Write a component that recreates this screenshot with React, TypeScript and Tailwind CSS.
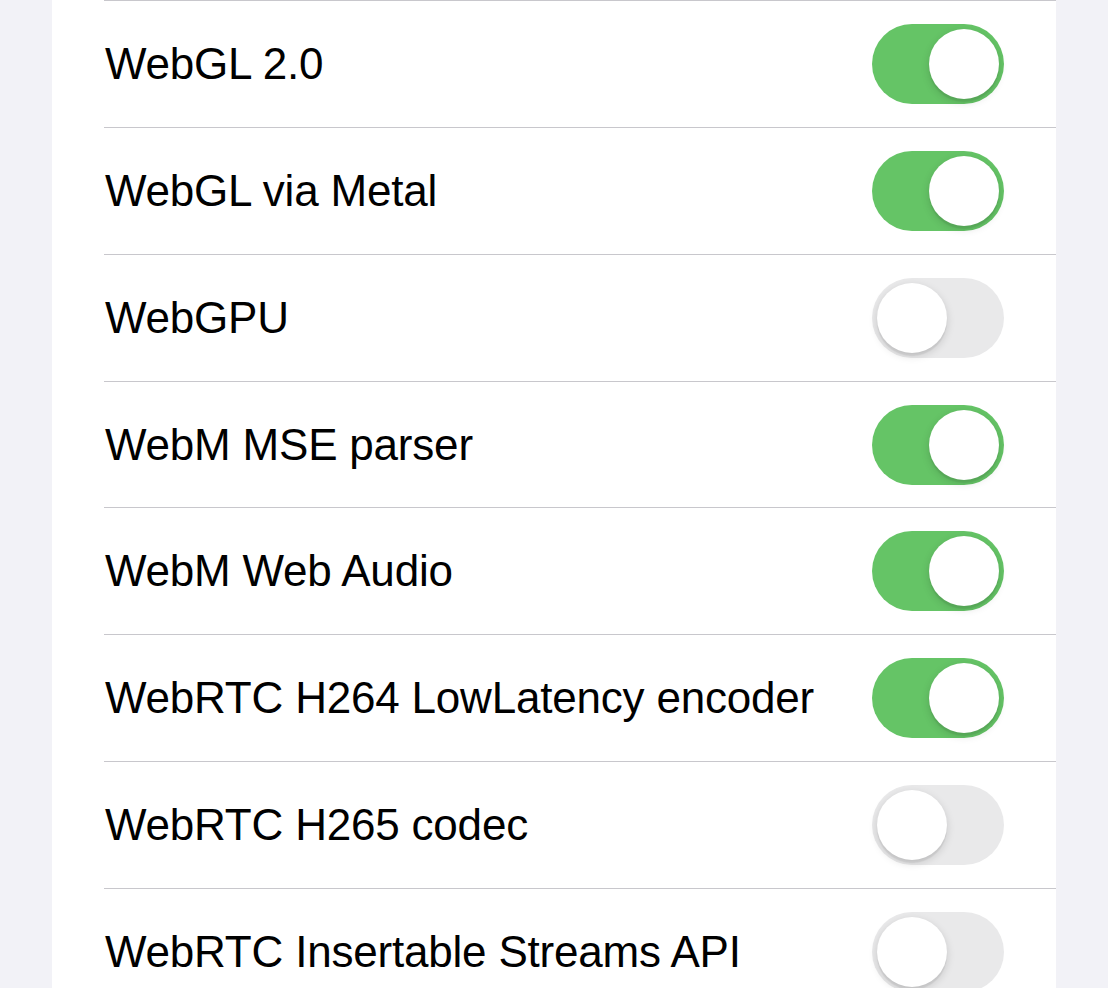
import React, { useState } from 'react';

type Flag = { label: string; on: boolean };

const FLAGS: Flag[] = [
  { label: 'WebGL 2.0', on: true },
  { label: 'WebGL via Metal', on: true },
  { label: 'WebGPU', on: false },
  { label: 'WebM MSE parser', on: true },
  { label: 'WebM Web Audio', on: true },
  { label: 'WebRTC H264 LowLatency encoder', on: true },
  { label: 'WebRTC H265 codec', on: false },
  { label: 'WebRTC Insertable Streams API', on: false },
];

function Toggle({ on, onChange }: { on: boolean; onChange: () => void }) {
  return (
    <button
      type="button"
      onClick={onChange}
      className={`relative w-[132px] h-[80px] shrink-0 rounded-full transition-colors duration-200 ${
        on ? 'bg-[#65c466]' : 'bg-[#e9e9ea]'
      }`}
    >
      <span
        className={`absolute top-[5px] w-[70px] h-[70px] rounded-full bg-white shadow-[0_3px_8px_rgba(0,0,0,0.15),0_3px_1px_rgba(0,0,0,0.06)] transition-all duration-200 ${
          on ? 'left-[57px]' : 'left-[5px]'
        }`}
      />
    </button>
  );
}

export default function App() {
  const [flags, setFlags] = useState(FLAGS);

  const flip = (i: number) =>
    setFlags(prev => prev.map((f, j) => (j === i ? { ...f, on: !f.on } : f)));

  return (
    <div className="h-screen overflow-hidden bg-[#f2f2f7] px-[52px]">
      <div className="bg-white pl-[52px]">
        {flags.map((f, i) => (
          <div
            key={f.label}
            className="h-[126.86px] border-t border-[#c8c7cc] pr-[52px] flex items-center justify-between"
          >
            <span
              className="text-[44px] text-black leading-none pl-[1px] tracking-[-0.2px]"
              style={{ fontFamily: '"Liberation Sans", Arial, sans-serif' }}
            >
              {f.label}
            </span>
            <Toggle on={f.on} onChange={() => flip(i)} />
          </div>
        ))}
      </div>
    </div>
  );
}
